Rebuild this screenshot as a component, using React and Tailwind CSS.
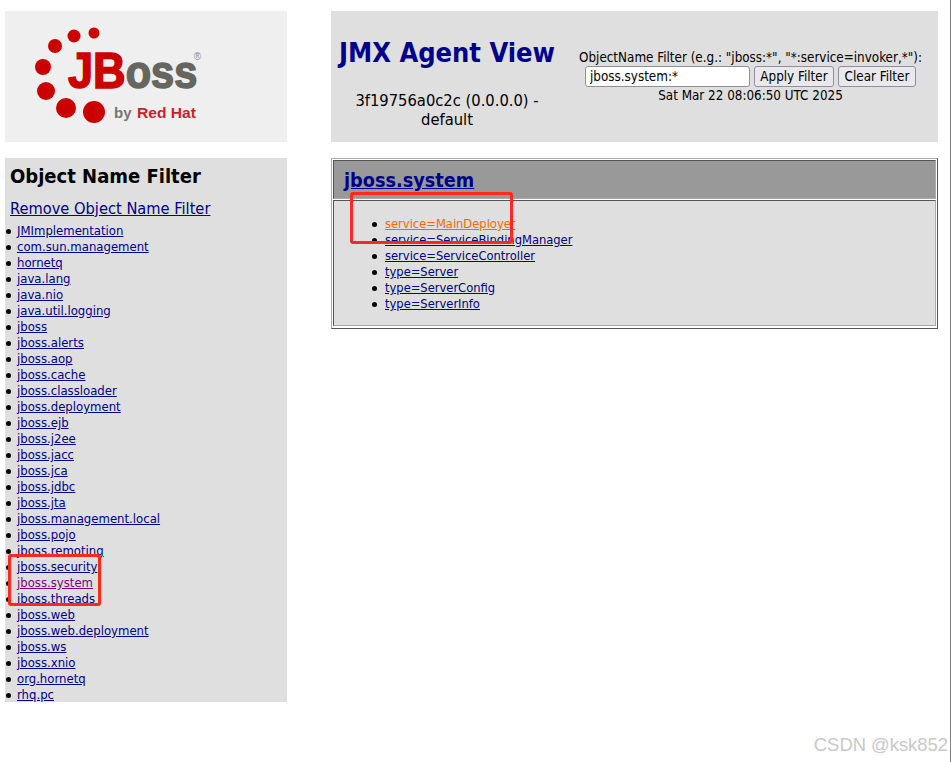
import React from 'react';

const domains = [
    'JMImplementation', 'com.sun.management', 'hornetq', 'java.lang', 'java.nio', 'java.util.logging',
    'jboss', 'jboss.alerts', 'jboss.aop', 'jboss.cache', 'jboss.classloader', 'jboss.deployment',
    'jboss.ejb', 'jboss.j2ee', 'jboss.jacc', 'jboss.jca', 'jboss.jdbc', 'jboss.jta',
    'jboss.management.local', 'jboss.pojo', 'jboss.remoting', 'jboss.security', 'jboss.system',
    'jboss.threads', 'jboss.web', 'jboss.web.deployment', 'jboss.ws', 'jboss.xnio', 'org.hornetq', 'rhq.pc'
];

const services = [
    'service=MainDeployer', 'service=ServiceBindingManager', 'service=ServiceController',
    'type=Server', 'type=ServerConfig', 'type=ServerInfo'
];

const logoFont = "'Liberation Sans', sans-serif";

const Logo = () => (
    <svg width="282" height="131" viewBox="0 0 282 131">
        <g fill="#cc0000">
            <circle cx="89" cy="22" r="5.5" />
            <circle cx="69" cy="25" r="6.5" />
            <circle cx="50" cy="35" r="7" />
            <circle cx="38" cy="56" r="8" />
            <circle cx="41" cy="80" r="9" />
            <circle cx="61" cy="97" r="10" />
            <circle cx="89" cy="101" r="11" />
        </g>
        <text x="63" y="77" fontFamily={logoFont} fontWeight="700" textLength="133" lengthAdjust="spacingAndGlyphs">
            <tspan fontSize="50" fill="#cc0000" stroke="#cc0000" strokeWidth="1.6">JB</tspan>
            <tspan fontSize="46" fill="#666660" stroke="#666660" strokeWidth="1.6">oss</tspan>
            <tspan fontSize="11" fontWeight="400" fill="#8a8a86" dx="-4" dy="-28">®</tspan>
        </text>
        <text x="109" y="107" fontFamily={logoFont} fontWeight="700" fontSize="15" fill="#77776f">by</text>
        <text x="132" y="107" fontFamily={logoFont} fontWeight="700" fontSize="15" textLength="59" lengthAdjust="spacingAndGlyphs" fill="#cc1f2b">Red Hat</text>
    </svg>
);

export default function App() {
    return (
        <div className="relative h-[762px] w-[951px] overflow-hidden bg-white font-['DejaVu_Sans_Condensed','DejaVu_Sans',sans-serif] text-[13px] leading-4 text-black">
            <div className="flex gap-[44px] pl-[5px] pt-[11px]">
                <div className="flex w-[282px] flex-col gap-4">
                    <div className="h-[131px] bg-[#efefef]">
                        <Logo />
                    </div>
                    <div className="h-[544px] bg-[#dfdfdf]">
                        <h2 className="px-[5px] pt-[6px] text-[20px] leading-6 font-bold">Object Name Filter</h2>
                        <a href="#" className="mt-[11px] block px-[5px] text-[16.3px] leading-5 text-[#00008b] underline">Remove Object Name Filter</a>
                        <ul className="mt-[4px]">
                            {domains.map((name) => (
                                <li key={name} className="flex h-4 items-center">
                                    <span className="ml-[1px] mr-[6px] h-[5px] w-[5px] rounded-full bg-black"></span>
                                    <a href="#" className={name === 'jboss.system' ? 'text-[#800080] underline' : 'text-[#00008b] underline'}>{name}</a>
                                </li>
                            ))}
                        </ul>
                    </div>
                </div>
                <div className="flex w-[607px] flex-col gap-4">
                    <div className="flex h-[131px] bg-[#dfdfdf]">
                        <div className="w-[232px] pt-[24px] text-center">
                            <h1 className="text-[27px] leading-9 font-bold text-[#00008b]">JMX Agent View</h1>
                            <p className="mx-auto mt-[20px] w-[200px] text-[16.4px] leading-[19px]">3f19756a0c2c (0.0.0.0) - default</p>
                        </div>
                        <div className="flex-1 pt-[39px] text-center text-[13.33px]">
                            <p>ObjectName Filter (e.g.: "jboss:*", "*:service=invoker,*"):</p>
                            <div className="flex justify-center gap-1">
                                <input readOnly value="jboss.system:*" className="h-[21px] w-[165px] rounded-[3px] border border-[#8f8f9d] bg-white px-1 text-[13.33px] outline-none" />
                                <button className="h-[21px] w-[80px] rounded-[3px] border border-[#8f8f9d] bg-[#e9e9ed]">Apply Filter</button>
                                <button className="h-[21px] w-[78px] rounded-[3px] border border-[#8f8f9d] bg-[#e9e9ed]">Clear Filter</button>
                            </div>
                            <p className="mt-[1px]">Sat Mar 22 08:06:50 UTC 2025</p>
                        </div>
                    </div>
                    <div className="h-[171px] border border-t-[#aaaaaa] border-r-[#555555] border-b-[#555555] border-l-[#aaaaaa] bg-white p-px">
                        <div className="h-[39px] border border-t-[#555555] border-r-[#aaaaaa] border-b-[#aaaaaa] border-l-[#555555] bg-[#999999] px-[10px]">
                            <a href="#" className="text-[19.7px] leading-[39px] font-bold text-[#00008b] underline">jboss.system</a>
                        </div>
                        <div className="mt-px h-[126px] border border-t-[#555555] border-r-[#aaaaaa] border-b-[#aaaaaa] border-l-[#555555] bg-[#dfdfdf] pt-[15px] text-[12.8px]">
                            <ul>
                                {services.map((name, index) => (
                                    <li key={name} className="flex h-4 items-center pl-[38px]">
                                        <span className="mr-[8px] h-[5px] w-[5px] rounded-full bg-black"></span>
                                        <a href="#" className={index === 0 ? 'text-[#ff6600] underline' : 'text-[#00008b] underline'}>{name}</a>
                                    </li>
                                ))}
                            </ul>
                        </div>
                    </div>
                </div>
            </div>

            {/* annotation boxes from the screenshot */}
            <div className="absolute top-[192px] left-[350px] h-[52px] w-[163px] rounded-[3px] border-[3px] border-[#ff2a1f]"></div>
            <div className="absolute top-[554px] left-[8px] h-[52px] w-[93px] rounded-[3px] border-[3px] border-[#ff2a1f]"></div>

            <div className="absolute right-0 top-0 h-full w-[1.5px] bg-[#808080]"></div>
            <div className="absolute right-[3px] bottom-[7px] font-['Liberation_Sans',sans-serif] text-[18.4px] leading-5 text-[#c8c8c8]">CSDN @ksk852</div>
        </div>
    );
}
